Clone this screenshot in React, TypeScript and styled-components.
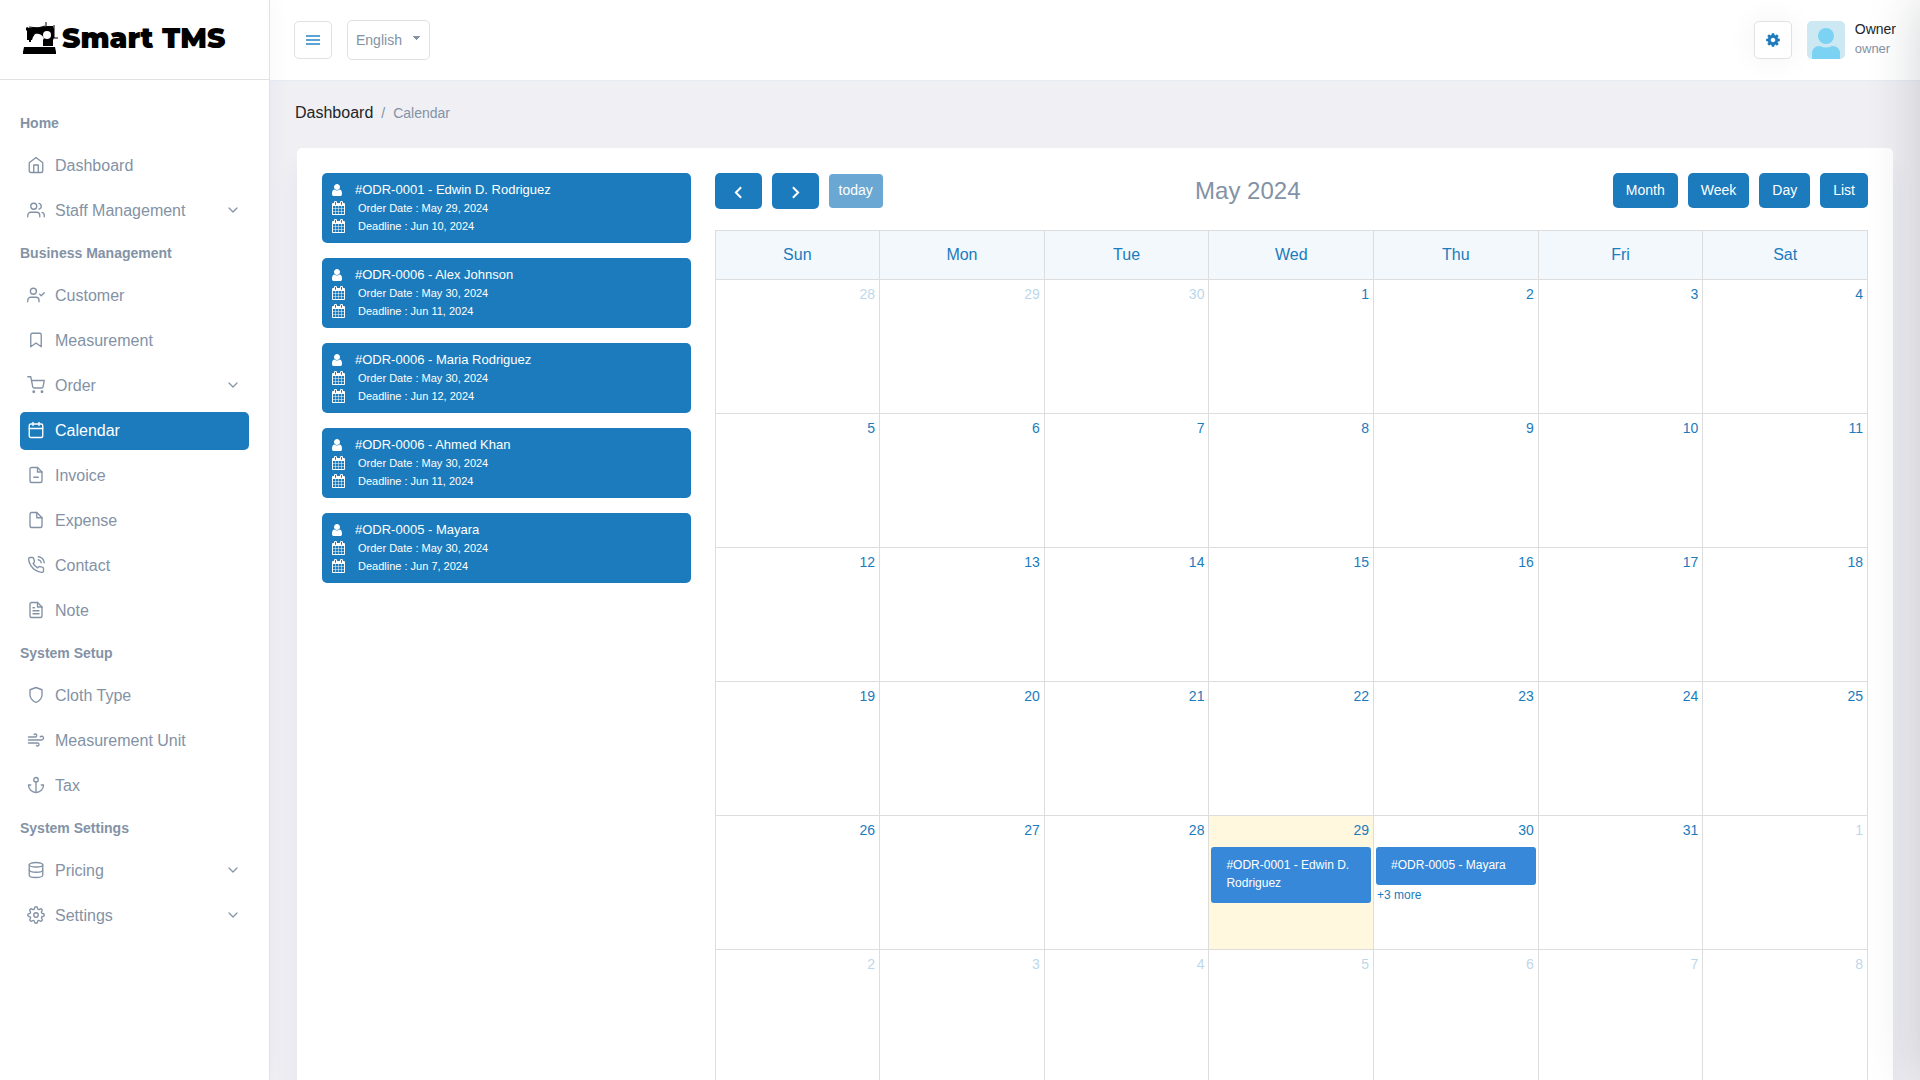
import React from "react";
import styled, { createGlobalStyle, css } from "styled-components";
import type { IconType } from "react-icons";
import {
  FiHome, FiUsers, FiUserCheck, FiBookmark, FiShoppingCart, FiCalendar, FiFileMinus, FiFile,
  FiPhoneCall, FiFileText, FiShield, FiWind, FiAnchor, FiDatabase, FiSettings, FiChevronDown,
} from "react-icons/fi";

const color = {
  primary: "#1b7bbd",
  muted: "#8392a5",
  ink: "#212529",
  line: "#e1e1e1",
  grid: "#dddddd",
  page: "#f0eff4",
  event: "#3788d8",
};

const GlobalStyle = createGlobalStyle`
  *, *::before, *::after { box-sizing: border-box; }
  html { overflow-x: hidden; }
  body {
    margin: 0;
    background: ${color.page};
    color: ${color.muted};
    font-family: "Liberation Sans", Arial, sans-serif;
    font-size: 14px;
    line-height: 21px;
  }
  button, select { font-family: inherit; }
  a { color: inherit; text-decoration: none; }
`;

const Shell = styled.div`
  display: flex;
  align-items: flex-start;
  height: 100vh;
  overflow: hidden;
`;

const Sidebar = styled.aside`
  flex: 0 0 270px;
  height: 100vh;
  background: #fff;
  border-right: 1px solid ${color.line};
  box-shadow: 0 0 24px rgba(60, 50, 100, 0.04);
  z-index: 2;
`;

const Brand = styled.a`
  display: flex;
  align-items: center;
  height: 80px;
  padding: 0 22px 4px;
  border-bottom: 1px solid ${color.line};
  color: #000;
`;

const BrandName = styled.span`
  margin-left: 4px;
  font-family: "Montserrat", "Inter", sans-serif;
  font-size: 28px;
  font-weight: 900;
  line-height: 32px;
  white-space: nowrap;
`;

const Menu = styled.nav`
  display: flex;
  flex-direction: column;
  gap: 7px;
  padding: 27px 20px;
`;

const MenuLabel = styled.h2`
  margin: 0;
  font-size: 14px;
  font-weight: 700;
  line-height: 33px;
`;

const MenuItem = styled.a<{ $active?: boolean }>`
  display: flex;
  align-items: center;
  gap: 10px;
  height: 38px;
  padding: 0 8px 2px 7px;
  border-radius: 5px;
  font-size: 16px;
  color: ${(p) => (p.$active ? "#fff" : color.muted)};
  background: ${(p) => (p.$active ? color.primary : "transparent")};

  svg { flex: none; stroke-width: 1.8; }
  svg:nth-of-type(2) { margin-left: auto; }
`;

const Main = styled.div`
  flex: 1;
  min-width: 0;
`;

const Header = styled.header`
  display: flex;
  align-items: center;
  gap: 15px;
  height: 80px;
  padding: 0 24px;
  background: #fff;
`;

const SquareButton = styled.button<{ $raised?: boolean }>`
  display: flex;
  align-items: center;
  justify-content: center;
  width: 38px;
  height: 38px;
  padding: 0;
  border: 1px solid ${color.line};
  border-radius: 5px;
  background: #fff;
  color: ${color.primary};
  ${(p) => p.$raised && css`
    margin-left: auto;
    box-shadow: 0 0 30px rgba(0, 0, 0, 0.06);
  `}
`;

const LanguageBox = styled.label`
  display: flex;
  align-items: center;
  height: 40px;
  border: 1px solid ${color.line};
  border-radius: 5px;
`;

const Language = styled.select`
  appearance: none;
  width: 81px;
  height: 38px;
  padding: 0 8px;
  border: 0;
  background: transparent;
  background-image: linear-gradient(45deg, transparent 50%, ${color.muted} 50%), linear-gradient(-45deg, transparent 50%, ${color.muted} 50%);
  background-size: 4px 4px;
  background-position: 65px 15px, 69px 15px;
  background-repeat: no-repeat;
  color: ${color.muted};
  font-size: 14px;
`;

const Profile = styled.a`
  display: flex;
  align-items: center;
  gap: 10px;
`;

const ProfileText = styled.span`
  display: flex;
  flex-direction: column;
  padding-bottom: 2px;
  font-size: 13px;
  line-height: 19px;

  strong { font-size: 14px; font-weight: 400; color: ${color.ink}; }
`;

const Crumbs = styled.ol`
  display: flex;
  align-items: center;
  gap: 8px;
  height: 68px;
  margin: 0;
  padding: 0 25px 3px;
  border-top: 1px solid #e6ebf4;
  list-style: none;

  a { font-size: 16px; color: ${color.ink}; }
`;

const Card = styled.main`
  display: grid;
  grid-template-columns: repeat(12, minmax(0, 1fr));
  column-gap: 24px;
  margin: 0 27px 27px;
  padding: 25px;
  border-radius: 5px;
  background: #fff;
  box-shadow: 0 20px 27px rgba(60, 50, 100, 0.06);
`;

const Orders = styled.section`
  grid-column: span 3;
  display: flex;
  flex-direction: column;
  gap: 15px;
`;

const OrderCard = styled.article`
  height: 70px;
  padding: 8px 10px;
  border-radius: 5px;
  background: ${color.primary};
  color: #fff;
`;

const OrderLine = styled.p<{ $title?: boolean }>`
  display: flex;
  align-items: center;
  gap: ${(p) => (p.$title ? 10 : 13)}px;
  margin: 0;
  font-size: ${(p) => (p.$title ? 13 : 11)}px;
  line-height: 18px;
`;

const Calendar = styled.section`
  grid-column: span 9;
`;

const Toolbar = styled.div`
  display: flex;
  align-items: center;
  justify-content: space-between;
  height: 36px;
  margin-bottom: 21px;
`;

const Group = styled.div`
  display: flex;
  align-items: center;
  gap: 10px;
`;

const Title = styled.h1`
  margin: 0;
  font-size: 24px;
  font-weight: 400;
  line-height: 30px;
`;

const ToolButton = styled.button<{ $nav?: boolean }>`
  display: flex;
  align-items: center;
  justify-content: center;
  height: ${(p) => (p.$nav ? 36 : 35)}px;
  min-width: ${(p) => (p.$nav ? 47 : 0)}px;
  padding: ${(p) => (p.$nav ? "2px 13px 0" : "0 13px 2px")};
  border: 0;
  border-radius: 5px;
  background: ${color.primary};
  color: #fff;
  font-size: 14px;

  &:disabled {
    height: 34px;
    padding: 0 10px 2px;
    border-radius: 4px;
    opacity: 0.65;
  }
`;

const ViewGroup = styled(Group)`
  align-self: flex-start;
`;

const Grid = styled.table`
  width: 100%;
  table-layout: fixed;
  border-collapse: collapse;
  border: 1px solid ${color.grid};

  th {
    height: 49px;
    padding: 0 0 2px;
    border: 1px solid ${color.grid};
    background: #f3f8fc;
    color: ${color.primary};
    font-size: 16px;
    font-weight: 400;
  }
`;

const Day = styled.td<{ $today?: boolean }>`
  height: 134px;
  padding: 4px 2px;
  border: 1px solid ${color.grid};
  vertical-align: top;
  background: ${(p) => (p.$today ? "#fff8df" : "#fff")};
  color: ${color.primary};
`;

const DayNumber = styled.a<{ $outside?: boolean }>`
  display: block;
  margin-bottom: 6px;
  padding-right: 2px;
  text-align: right;
  opacity: ${(p) => (p.$outside ? 0.3 : 1)};
`;

const Event = styled.a`
  display: block;
  padding: 9px 15px 11px;
  border-radius: 3px;
  background: ${color.event};
  color: #fff;
  font-size: 12px;
  line-height: 18px;
`;

const More = styled.a`
  display: block;
  padding: 1px;
  font-size: 12px;
  line-height: 18px;
`;

const EdgeShade = styled.div`
  position: fixed;
  top: 0;
  bottom: 0;
  left: 100%;
  width: 300px;
  box-shadow: 0 0 50px rgba(30, 40, 50, 0.2);
  z-index: 3;
`;

type Entry = { label: string; icon?: IconType; more?: boolean; active?: boolean };

const menu: Entry[] = [
  { label: "Home" },
  { label: "Dashboard", icon: FiHome },
  { label: "Staff Management", icon: FiUsers, more: true },
  { label: "Business Management" },
  { label: "Customer", icon: FiUserCheck },
  { label: "Measurement", icon: FiBookmark },
  { label: "Order", icon: FiShoppingCart, more: true },
  { label: "Calendar", icon: FiCalendar, active: true },
  { label: "Invoice", icon: FiFileMinus },
  { label: "Expense", icon: FiFile },
  { label: "Contact", icon: FiPhoneCall },
  { label: "Note", icon: FiFileText },
  { label: "System Setup" },
  { label: "Cloth Type", icon: FiShield },
  { label: "Measurement Unit", icon: FiWind },
  { label: "Tax", icon: FiAnchor },
  { label: "System Settings" },
  { label: "Pricing", icon: FiDatabase, more: true },
  { label: "Settings", icon: FiSettings, more: true },
];

const orders = [
  ["#ODR-0001 - Edwin D. Rodriguez", "May 29, 2024", "Jun 10, 2024"],
  ["#ODR-0006 - Alex Johnson", "May 30, 2024", "Jun 11, 2024"],
  ["#ODR-0006 - Maria Rodriguez", "May 30, 2024", "Jun 12, 2024"],
  ["#ODR-0006 - Ahmed Khan", "May 30, 2024", "Jun 11, 2024"],
  ["#ODR-0005 - Mayara", "May 30, 2024", "Jun 7, 2024"],
];

const weekdays = ["Sun", "Mon", "Tue", "Wed", "Thu", "Fri", "Sat"];

const weeks = Array.from({ length: 6 }, (_, week) =>
  weekdays.map((_, day) => {
    const date = new Date(2024, 3, 28 + week * 7 + day);
    return { number: date.getDate(), inMonth: date.getMonth() === 4 };
  })
);

const UserGlyph = () => (
  <svg width="13" height="14" viewBox="256 0 1664 1792" fill="currentColor" aria-hidden="true">
    <path d="M1536 1399q0 109-62.5 187t-150.5 78h-854q-88 0-150.5-78t-62.5-187q0-85 8.5-160.5t31.5-152 58.5-131 94-89 134.5-34.5q131 128 313 128t313-128q76 0 134.5 34.5t94 89 58.5 131 31.5 152 8.5 160.5zm-256-887q0 159-112.5 271.5t-271.5 112.5-271.5-112.5-112.5-271.5 112.5-271.5 271.5-112.5 271.5 112.5 112.5 271.5z" />
  </svg>
);

const CalendarGlyph = () => (
  <svg width="13" height="14" viewBox="64 0 1664 1792" fill="currentColor" aria-hidden="true">
    <path d="M192 1664h288v-288h-288v288zm352 0h320v-288h-320v288zm-352-352h288v-320h-288v320zm352 0h320v-320h-320v320zm-352-384h288v-288h-288v288zm736 736h320v-288h-320v288zm-384-736h320v-288h-320v288zm768 736h288v-288h-288v288zm-384-352h320v-320h-320v320zm-352-864v-288q0-13-9.5-22.5t-22.5-9.5h-64q-13 0-22.5 9.5t-9.5 22.5v288q0 13 9.5 22.5t22.5 9.5h64q13 0 22.5-9.5t9.5-22.5zm736 864h288v-320h-288v320zm-384-384h320v-288h-320v288zm384 0h288v-288h-288v288zm32-480v-288q0-13-9.5-22.5t-22.5-9.5h-64q-13 0-22.5 9.5t-9.5 22.5v288q0 13 9.5 22.5t22.5 9.5h64q13 0 22.5-9.5t9.5-22.5zm384-64v1280q0 52-38 90t-90 38h-1408q-52 0-90-38t-38-90v-1280q0-52 38-90t90-38h128v-96q0-66 47-113t113-47h64q66 0 113 47t47 113v96h384v-96q0-66 47-113t113-47h64q66 0 113 47t47 113v96h128q52 0 90 38t38 90z" />
  </svg>
);

const SewingMachine = () => (
  <svg width="36" height="34" viewBox="0 0 36 34" aria-hidden="true">
    <path d="M2 26h31l1 5v2H1v-2z" />
    <path d="M4 7l1-1 2 1 14-1 4-1h6l1 3v9l-1 2v6H21v-6l1-2c-2-4-6-5-9-4l-2 3-1 3H9v2H7v-2H5V10l-1-1z" />
    <path d="M24 1v5M32 4v13M32 17h4M7 6l9 1 7-2" fill="none" stroke="#000" strokeWidth="1" />
    <circle cx="25" cy="14" r="4" fill="#fff" />
  </svg>
);

const Chevron = ({ back }: { back?: boolean }) => (
  <svg width="21" height="21" viewBox="0 0 32 32" fill="none" stroke="currentColor" strokeWidth="3" aria-hidden="true">
    <path d={back ? "M20 8l-8 8 8 8" : "M12 8l8 8-8 8"} />
  </svg>
);

const GearGlyph = () => (
  <svg width="16" height="16" viewBox="0 0 1792 1792" fill="currentColor" aria-hidden="true">
    <path d="M1152 896q0-106-75-181t-181-75-181 75-75 181 75 181 181 75 181-75 75-181zm512-109v222q0 12-8 23t-20 13l-185 28q-19 54-39 91 35 50 107 138 10 12 10 25t-9 23q-27 37-99 108t-94 71q-12 0-26-9l-138-108q-44 23-91 38-16 136-29 186-7 28-36 28h-222q-14 0-24.500-8.500t-11.500-21.500l-28-184q-49-16-90-37l-141 107q-10 9-25 9-14 0-25-11-126-114-165-168-7-10-7-23 0-12 8-23 15-21 51-66.500t54-70.500q-27-50-41-99l-183-27q-13-2-21-12.500t-8-23.500v-222q0-12 8-23t19-13l186-28q14-46 39-92-40-57-107-138-10-12-10-24 0-10 9-23 26-36 98.500-107.500t94.500-71.500q13 0 26 10l138 107q44-23 91-38 16-136 29-186 7-28 36-28h222q14 0 24.500 8.500t11.500 21.500l28 184q49 16 90 37l142-107q9-9 24-9 13 0 25 10 129 119 165 170 7 8 7 22 0 12-8 23-15 21-51 66.500t-54 70.500q26 50 41 98l183 28q13 2 21 12.500t8 23.500z" />
  </svg>
);

const Avatar = () => (
  <svg width="38" height="38" viewBox="0 0 38 38" role="img" aria-label="Owner">
    <rect width="38" height="38" rx="5" fill="#cbe8f3" />
    <circle cx="19" cy="15" r="8" fill="#7bd2f2" />
    <path d="M5 38v-5q0-8 8-8 6 3 12 0 8 0 8 8v5z" fill="#7bd2f2" />
  </svg>
);

export default function App() {
  return (
    <>
      <GlobalStyle />
      <Shell>
        <Sidebar>
          <Brand href="#">
            <SewingMachine />
            <BrandName>Smart TMS</BrandName>
          </Brand>
          <Menu>
            {menu.map(({ label, icon: Icon, more, active }) =>
              Icon ? (
                <MenuItem key={label} href="#" $active={active}>
                  <Icon size={18} />
                  {label}
                  {more && <FiChevronDown size={16} />}
                </MenuItem>
              ) : (
                <MenuLabel key={label}>{label}</MenuLabel>
              )
            )}
          </Menu>
        </Sidebar>
        <Main>
          <Header>
            <SquareButton aria-label="Toggle menu">
              <svg width="14" height="12" viewBox="0 0 14 12" stroke="#5aa5d5" strokeWidth="2" aria-hidden="true">
                <path d="M0 2h14M0 6h14M0 10h14" />
              </svg>
            </SquareButton>
            <LanguageBox>
              <Language aria-label="Language" defaultValue="English">
                <option>English</option>
              </Language>
            </LanguageBox>
            <SquareButton $raised aria-label="Theme settings">
              <GearGlyph />
            </SquareButton>
            <Profile href="#">
              <Avatar />
              <ProfileText>
                <strong>Owner</strong>
                owner
              </ProfileText>
            </Profile>
          </Header>
          <Crumbs>
            <li><a href="#">Dashboard</a></li>
            <li>/</li>
            <li>Calendar</li>
          </Crumbs>
          <Card>
            <Orders>
              {orders.map(([name, ordered, deadline]) => (
                <OrderCard key={name}>
                  <OrderLine $title><UserGlyph />{name}</OrderLine>
                  <OrderLine><CalendarGlyph />Order Date : {ordered}</OrderLine>
                  <OrderLine><CalendarGlyph />Deadline : {deadline}</OrderLine>
                </OrderCard>
              ))}
            </Orders>
            <Calendar>
              <Toolbar>
                <Group>
                  <ToolButton $nav aria-label="Previous month"><Chevron back /></ToolButton>
                  <ToolButton $nav aria-label="Next month"><Chevron /></ToolButton>
                  <ToolButton disabled>today</ToolButton>
                </Group>
                <Title>May 2024</Title>
                <ViewGroup>
                  {["Month", "Week", "Day", "List"].map((view) => (
                    <ToolButton key={view}>{view}</ToolButton>
                  ))}
                </ViewGroup>
              </Toolbar>
              <Grid>
                <thead>
                  <tr>{weekdays.map((name) => <th key={name} scope="col">{name}</th>)}</tr>
                </thead>
                <tbody>
                  {weeks.map((days, week) => (
                    <tr key={week}>
                      {days.map(({ number, inMonth }) => (
                        <Day key={number} $today={inMonth && number === 29}>
                          <DayNumber href="#" $outside={!inMonth}>{number}</DayNumber>
                          {inMonth && number === 29 && <Event href="#">#ODR-0001 - Edwin D. Rodriguez</Event>}
                          {inMonth && number === 30 && (
                            <>
                              <Event href="#">#ODR-0005 - Mayara</Event>
                              <More href="#">+3 more</More>
                            </>
                          )}
                        </Day>
                      ))}
                    </tr>
                  ))}
                </tbody>
              </Grid>
            </Calendar>
          </Card>
        </Main>
      </Shell>
      <EdgeShade />
    </>
  );
}
